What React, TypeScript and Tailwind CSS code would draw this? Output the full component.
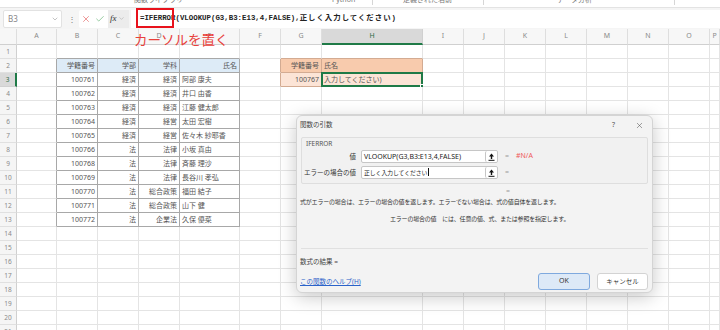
import { X, Check, ChevronDown } from 'lucide-react'

const students = [
  ['100761', '経済', '経済', '阿部 康夫'],
  ['100762', '経済', '経済', '井口 由香'],
  ['100763', '経済', '経済', '江藤 健太郎'],
  ['100764', '経済', '経営', '太田 宏樹'],
  ['100765', '経済', '経営', '佐々木 紗耶香'],
  ['100766', '法', '法律', '小坂 真由'],
  ['100768', '法', '法律', '斉藤 理沙'],
  ['100769', '法', '法律', '長谷川 孝弘'],
  ['100770', '法', '総合政策', '福田 結子'],
  ['100771', '法', '総合政策', '山下 健'],
  ['100772', '法', '企業法', '久保 優菜'],
]

const letters = ['', 'A', 'B', 'C', 'D', 'E', 'F', 'G', 'H', 'I', 'J', 'K', 'L', 'M', 'N', 'O', 'P']
const rows = Array.from({ length: 21 }, (_, i) => i + 1)

const gridCols =
  'grid grid-cols-[17px_40px_41px_41px_41px_60px_41px_41px_101px_41px_41px_41px_41px_41px_41px_41px_10px]'

function cellText(r: number, c: number): { t: string; right: boolean } {
  if (r === 2 && c >= 2 && c <= 5) return { t: ['学籍番号', '学部', '学科', '氏名'][c - 2], right: true }
  if (r >= 3 && r <= 13 && c >= 2 && c <= 5) return { t: students[r - 3][c - 2], right: c !== 5 }
  if (r === 2 && c === 7) return { t: '学籍番号', right: true }
  if (r === 2 && c === 8) return { t: '氏名', right: false }
  if (r === 3 && c === 7) return { t: '100767', right: true }
  if (r === 3 && c === 8) return { t: '入力してください)', right: false }
  return { t: '', right: false }
}

function Cell({ r, c }: { r: number; c: number }) {
  const inBlue = r >= 2 && r <= 13 && c >= 2 && c <= 5
  const inOrange = r >= 2 && r <= 3 && c >= 7 && c <= 8
  const rightCls =
    inBlue || (c === 1 && r >= 2 && r <= 13)
      ? 'border-r-[#a8a8a8]'
      : inOrange || (c === 6 && r >= 2 && r <= 3)
        ? 'border-r-[#d3ab92]'
        : 'border-r-[#e4e4e4]'
  const bottomCls =
    inBlue || (r === 1 && c >= 2 && c <= 5)
      ? 'border-b-[#a8a8a8]'
      : inOrange || (r === 1 && c >= 7 && c <= 8)
        ? 'border-b-[#d3ab92]'
        : 'border-b-[#e4e4e4]'
  const bg =
    r === 2 && c >= 2 && c <= 5
      ? 'bg-[#ddebf7]'
      : r === 2 && inOrange
        ? 'bg-[#f8cbad]'
        : r === 3 && inOrange
          ? 'bg-[#fce4d6]'
          : 'bg-white'
  const { t, right } = cellText(r, c)
  return (
    <div
      className={`relative h-[14px] overflow-visible whitespace-nowrap border-r border-b px-[2px] text-[7px] leading-[13px] text-[#555] ${rightCls} ${bottomCls} ${bg} ${right ? 'text-right' : 'text-left'}`}
    >
      {t}
      {r === 3 && c === 8 && (
        <>
          <div className="absolute -left-px -top-px h-[15px] w-[102px] border-2 border-[#1f7a47]" />
          <div className="absolute -bottom-[2px] -right-[2px] h-[4px] w-[4px] border border-white bg-[#1f7a47]" />
        </>
      )}
    </div>
  )
}

function RefArrow() {
  return (
    <svg width="7" height="8" viewBox="0 0 7 8">
      <polygon points="3.5,0.5 1,3.5 6,3.5" fill="#111" />
      <rect x="2.8" y="3" width="1.4" height="3" fill="#111" />
      <rect x="0.5" y="6.8" width="6" height="1" fill="#111" />
    </svg>
  )
}

function ArgRow({
  label,
  value,
  result,
  cursor,
  small,
}: {
  label: string
  value: string
  result?: string
  cursor?: boolean
  small?: boolean
}) {
  return (
    <div className="flex h-[13px] items-center">
      <span className="w-[54px] text-right text-[6.5px] text-[#333]">{label}</span>
      <div className="ml-[5px] flex h-[13px] w-[137px] items-center rounded-[2px] border border-[#c6c6c6] bg-white">
        <span
          className={`flex-1 whitespace-nowrap pl-[2px] leading-[11px] text-[#222] ${small ? 'text-[5.8px]' : 'text-[7px]'}`}
        >
          {value}
          {cursor && <span className="ml-[0.5px] inline-block h-[8px] w-px translate-y-[1px] bg-[#111]" />}
        </span>
        <span className="flex h-[11px] w-[12px] items-center justify-center rounded-[2px] border-l border-[#c6c6c6] bg-white">
          <RefArrow />
        </span>
      </div>
      <span className="ml-[7px] text-[7px] text-[#9a9a9a]">=</span>
      {result && <span className="ml-[7px] text-[7px] text-[#ef5a5a]">{result}</span>}
    </div>
  )
}

export default function App() {
  return (
    <div className="relative h-[330px] w-[720px] overflow-hidden bg-white font-['Noto_Sans','Noto_Sans_CJK_JP',sans-serif]">
      {/* ribbon cut off at the top */}
      <div className="h-[7px] overflow-hidden bg-white">
        <div className="-mt-[5px] flex h-[10px] items-start text-[7px] leading-[10px] text-[#777]">
          <span className="ml-[134px] w-[60px]">関数ライブラリ</span>
          <span className="ml-[138px] w-[40px]">Python</span>
          <span className="h-[10px] w-px bg-[#d6d6d6]" />
          <span className="ml-[30px] w-[80px]">定義された名前</span>
          <span className="h-[10px] w-px bg-[#d6d6d6]" />
          <span className="ml-[73px] w-[60px]">データ分析</span>
          <span className="ml-[57px] h-[10px] w-px bg-[#d6d6d6]" />
        </div>
      </div>

      {/* formula bar */}
      <div className="flex h-[22px] items-center border-t border-[#e3e3e3] bg-[#f5f5f5]">
        <div className="ml-[3px] flex h-[18px] w-[59px] items-center justify-between rounded-[2px] border border-[#e2e2e2] bg-white pl-[4px] pr-[2px] text-[8px] text-[#888]">
          B3
          <ChevronDown size={8} strokeWidth={1.5} color="#888" />
        </div>
        <span className="ml-[6px] text-[8px] text-[#777]">⋮</span>
        <div className="ml-[3px] flex h-[18px] w-[50px] items-center rounded-[2px] bg-white">
          <X size={10} strokeWidth={1.5} color="#e25b5b" className="ml-[2px]" />
          <Check size={10} strokeWidth={1.5} color="#5cad6a" className="ml-[4px]" />
          <div className="ml-[3px] flex h-[18px] flex-1 items-center bg-[#ececec] pl-[2px]">
            <span className="font-['Liberation_Serif',serif] text-[9px] italic text-[#333]">fx</span>
            <ChevronDown size={7} strokeWidth={1.5} color="#999" className="ml-[1px]" />
          </div>
        </div>
        <div className="ml-[2px] flex h-[18px] flex-1 items-center bg-white pl-[9px]">
          <span className="whitespace-nowrap font-['Liberation_Mono','Noto_Sans_CJK_JP',monospace] text-[7.4px] font-bold text-[#222]">
            =IFERROR(VLOOKUP(G3,B3:E13,4,FALSE),<span className="tracking-[1px]">正しく入力してください</span>)
          </span>
        </div>
      </div>

      {/* sheet */}
      <div className={gridCols}>
        {letters.map((l, c) => (
          <div
            key={l + c}
            className={`flex h-[16px] items-center justify-center border-r border-b text-[7px] ${
              c === 8
                ? 'border-r-[#d0d0d0] border-b-2 border-b-[#1f7a47] bg-[#d9d9d9] text-[#2a6a44]'
                : 'border-r-[#dedede] border-b-[#d0d0d0] bg-[#f7f7f7] text-[#8a8a8a]'
            }`}
          >
            {l}
          </div>
        ))}
        {rows.map(r =>
          letters.map((_, c) =>
            c === 0 ? (
              <div
                key={`${r}-0`}
                className={`flex h-[14px] items-center justify-center border-b text-[6.5px] ${
                  r === 3
                    ? 'border-r-2 border-r-[#1f7a47] border-b-[#d0d0d0] bg-[#d9d9d9] text-[#2a6a44]'
                    : 'border-r border-r-[#d0d0d0] border-b-[#e0e0e0] bg-[#f5f5f5] text-[#8a8a8a]'
                }`}
              >
                {r}
              </div>
            ) : (
              <Cell key={`${r}-${c}`} r={r} c={c} />
            )
          )
        )}
      </div>

      {/* annotation over the formula */}
      <div className="absolute left-[136px] top-[8px] h-[20px] w-[38px] border-2 border-[#e8121c]" />
      <div className="absolute left-[134px] top-[31px] text-[13.5px] leading-[18px] text-[#e8403a]">カーソルを置く</div>

      {/* Function Arguments dialog */}
      <div className="absolute left-[296px] top-[115px] flex h-[178px] w-[357px] flex-col rounded-[6px] border border-[#d4d4d4] bg-[#f3f3f3] text-[#333] shadow-[0_4px_18px_rgba(0,0,0,0.22)]">
        <div className="flex h-[18px] items-center justify-between pl-[3px] pr-[8px]">
          <span className="text-[6.5px] text-[#444]">関数の引数</span>
          <div className="flex items-center gap-[20px]">
            <span className="text-[7px] text-[#555]">?</span>
            <X size={9} strokeWidth={1.3} color="#444" />
          </div>
        </div>

        <div className="ml-[4px] mr-[4px] mt-[3px] h-[47px] rounded-[2px] border border-[#dedede] bg-[#f1f1f1]">
          <div className="flex h-[11px] items-center pl-[4px] text-[6.5px] text-[#555]">IFERROR</div>
          <div className="mt-[1px]">
            <ArgRow label="値" value="VLOOKUP(G3,B3:E13,4,FALSE)" result="#N/A" />
          </div>
          <div className="mt-[3px]">
            <ArgRow label="エラーの場合の値" value="正しく入力してください" cursor small />
          </div>
        </div>

        <div className="ml-[209px] mt-[2px] h-[10px] text-[7px] leading-[10px] text-[#9a9a9a]">=</div>
        <div className="ml-[3px] mt-[1px] h-[10px] whitespace-nowrap text-[6px] leading-[10px] tracking-[-0.2px] text-[#333]">
          式がエラーの場合は、エラーの場合の値を返します。エラーでない場合は、式の値自体を返します。
        </div>
        <div className="ml-[93px] mt-[7px] h-[10px] whitespace-nowrap text-[6px] leading-[10px] tracking-[-0.2px] text-[#333]">
          エラーの場合の値　には、任意の値、式、または参照を指定します。
        </div>

        <div className="ml-[4px] mr-[4px] mt-[24px] h-px bg-[#e0e0e0]" />
        <div className="ml-[3px] mt-[8px] h-[10px] text-[6.5px] leading-[10px] text-[#444]">数式の結果 =</div>

        <div className="mt-[6px] flex items-center pl-[3px] pr-[4px]">
          <span className="text-[6.5px] text-[#2a62c9] underline">この関数のヘルプ(H)</span>
          <div className="ml-auto flex gap-[7px]">
            <div className="flex h-[17px] w-[52px] items-center justify-center rounded-[3px] border border-[#7fa9de] bg-[#dde9f7] text-[7px] text-[#333]">
              OK
            </div>
            <div className="flex h-[17px] w-[51px] items-center justify-center rounded-[3px] border border-[#d3d3d3] bg-white text-[6.5px] text-[#333]">
              キャンセル
            </div>
          </div>
        </div>
      </div>
    </div>
  )
}
